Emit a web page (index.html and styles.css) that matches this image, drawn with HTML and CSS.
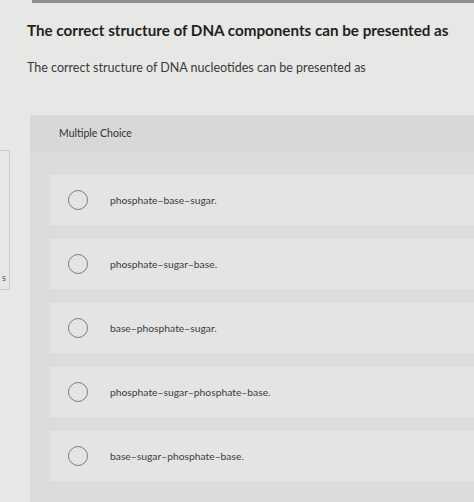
FILE: index.html
```html
<!DOCTYPE html>
<html lang="en">
<head>
  <meta charset="UTF-8">
  <meta name="viewport" content="width=device-width, initial-scale=1.0">
  <title>Multiple Choice</title>
  <link rel="stylesheet" href="styles.css">
</head>
<body>
  <div class="topline"></div>

  <div class="page">
    <aside class="side">
      <div class="side-box">
        <span class="side-tag">s</span>
      </div>
    </aside>

    <main class="content">
      <h1>The correct structure of DNA components can be presented as</h1>
      <p class="prompt">The correct structure of DNA nucleotides can be presented as</p>

      <section class="question">
        <div class="question-head">Multiple Choice</div>
        <ul class="choices">
          <li class="choice"><span class="radio"></span>phosphate–base–sugar.</li>
          <li class="choice"><span class="radio"></span>phosphate–sugar–base.</li>
          <li class="choice"><span class="radio"></span>base–phosphate–sugar.</li>
          <li class="choice"><span class="radio"></span>phosphate–sugar–phosphate–base.</li>
          <li class="choice"><span class="radio"></span>base–sugar–phosphate–base.</li>
        </ul>
      </section>
    </main>
  </div>
</body>
</html>
```

FILE: styles.css
```css
body {
  margin: 0;
  padding: 0;
  background-color: #e7e7e5;
  color: #2b2b2b;
  font-family: Lato, 'Open Sans', Arial, sans-serif;
  overflow: hidden;
}

.topline {
  height: 3px;
  margin-left: 32px;
  background-color: #8e8e8e;
}

.page {
  display: flex;
}

.side {
  width: 10px;
  flex-shrink: 0;
}

.side-box {
  margin-top: 147px;
  height: 140px;
  border: 1px solid #cdcdcb;
  border-left: none;
  display: flex;
  align-items: flex-end;
  padding-bottom: 6px;
  box-sizing: border-box;
}

.side-tag {
  font-size: 9px;
  color: #555;
  padding-left: 2px;
}

.content {
  flex: 1;
  min-width: 0;
  padding-left: 17px;
}

h1 {
  margin: 17px 0 0;
  font-size: 15.2px;
  line-height: 20px;
  font-weight: 700;
  color: #1f1f1f;
  white-space: nowrap;
}

.prompt {
  margin: 20px 0 0;
  font-size: 12.5px;
  line-height: 16px;
  color: #3a3a3a;
  white-space: nowrap;
}

.question {
  margin: 39px 0 0 3px;
  background-color: #dcdcda;
  padding-bottom: 30px;
}

.question-head {
  height: 37px;
  line-height: 37px;
  padding-left: 29px;
  font-size: 10.5px;
  color: #333;
  background-color: #d8d8d6;
}

.choices {
  list-style: none;
  margin: 0;
  padding: 23px 0 0 20px;
  display: flex;
  flex-direction: column;
  gap: 14px;
}

.choice {
  height: 50px;
  display: flex;
  align-items: center;
  padding-left: 18px;
  background-color: #e4e4e2;
  font-size: 10.3px;
  color: #3d3d3d;
}

.radio {
  width: 18px;
  height: 18px;
  border: 1.5px solid #7d7d7d;
  border-radius: 50%;
  margin-right: 22px;
  flex-shrink: 0;
}
```
